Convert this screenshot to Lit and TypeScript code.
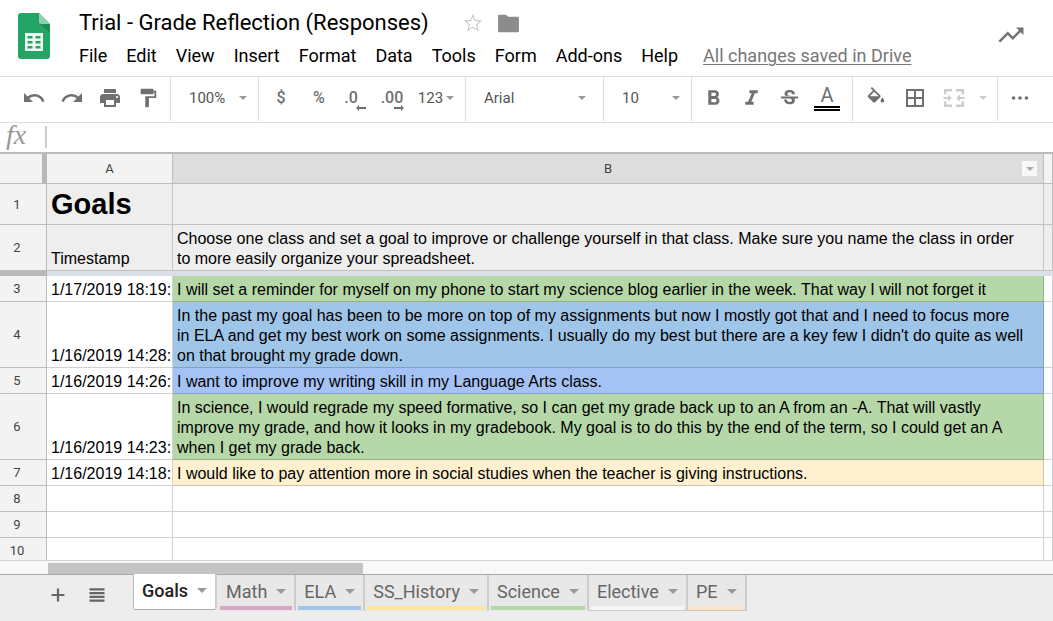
import { LitElement, html, svg, css, nothing } from "lit";
import { customElement, property, state } from "lit/decorators.js";
import { classMap } from "lit/directives/class-map.js";

const icons = {
  undo: svg`<path d="M12.5 8c-2.65 0-5.05.99-6.9 2.6L2 7v9h9l-3.62-3.62c1.39-1.16 3.16-1.88 5.12-1.88 3.54 0 6.55 2.31 7.6 5.5l2.37-.78C21.08 11.03 17.15 8 12.5 8z"/>`,
  redo: svg`<path d="M18.4 10.6C16.55 8.99 14.15 8 11.5 8c-4.65 0-8.58 3.03-9.96 7.22L3.9 16c1.05-3.19 4.05-5.5 7.6-5.5 1.95 0 3.73.72 5.12 1.88L13 16h9V7l-3.6 3.6z"/>`,
  print: svg`<path d="M19 8H5c-1.66 0-3 1.34-3 3v6h4v4h12v-4h4v-6c0-1.66-1.34-3-3-3zm-3 11H8v-5h8v5zm3-7c-.55 0-1-.45-1-1s.45-1 1-1 1 .45 1 1-.45 1-1 1zm-1-9H6v4h12V3z"/>`,
  paint: svg`<path d="M18 4V3c0-.55-.45-1-1-1H5c-.55 0-1 .45-1 1v4c0 .55.45 1 1 1h12c.55 0 1-.45 1-1V6h1v4H9v11c0 .55.45 1 1 1h2c.55 0 1-.45 1-1v-9h8V4h-3z"/>`,
  bold: svg`<path d="M15.6 10.79c.97-.67 1.65-1.77 1.65-2.79 0-2.26-1.75-4-4-4H7v14h7.04c2.09 0 3.71-1.7 3.71-3.79 0-1.52-.86-2.82-2.15-3.42zM10 6.5h3c.83 0 1.5.67 1.5 1.5s-.67 1.5-1.5 1.5h-3v-3zm3.5 9H10v-3h3.5c.83 0 1.5.67 1.5 1.5s-.67 1.5-1.5 1.5z"/>`,
  italic: svg`<path d="M10 4v3h2.21l-3.42 8H6v3h8v-3h-2.21l3.42-8H18V4z"/>`,
  strike: svg`<path d="M7.24 8.75c-.26-.48-.39-1.03-.39-1.67 0-.61.13-1.16.4-1.67.26-.5.63-.93 1.11-1.29.48-.35 1.05-.63 1.7-.83.66-.19 1.39-.29 2.18-.29.81 0 1.54.11 2.21.34.66.22 1.23.54 1.69.94.47.4.83.88 1.08 1.43.25.55.38 1.15.38 1.81h-3.01c0-.31-.05-.59-.15-.85-.09-.27-.24-.49-.44-.68-.2-.19-.45-.33-.75-.44-.3-.1-.66-.16-1.06-.16-.39 0-.74.04-1.03.13-.29.09-.53.21-.72.36-.19.16-.34.34-.44.55-.1.21-.15.43-.15.66 0 .48.25.88.74 1.21.38.25.77.48 1.41.7H7.39c-.05-.08-.11-.17-.15-.25zM21 12v-2H3v2h9.62c.18.07.4.14.55.2.37.17.66.34.87.51.21.17.35.36.43.57.07.2.11.43.11.69 0 .23-.05.45-.14.66-.09.2-.23.38-.42.53-.19.15-.42.26-.71.35-.29.08-.63.13-1.01.13-.43 0-.83-.04-1.18-.13s-.66-.23-.91-.42c-.25-.19-.45-.44-.59-.75-.14-.31-.25-.76-.25-1.21H6.4c0 .55.08 1.13.24 1.58.16.45.37.85.65 1.21.28.35.6.66.98.92.37.26.78.48 1.22.65.44.17.9.3 1.38.39.48.08.96.13 1.44.13.8 0 1.53-.09 2.18-.28s1.21-.45 1.67-.79c.46-.34.82-.77 1.07-1.27s.38-1.07.38-1.71c0-.6-.1-1.14-.31-1.61-.05-.11-.11-.23-.17-.33H21z"/>`,
  fill: svg`<path d="M16.56 8.94L7.62 0 6.21 1.41l2.38 2.38-5.15 5.15c-.59.59-.59 1.54 0 2.12l5.5 5.5c.29.29.68.44 1.06.44s.77-.15 1.06-.44l5.5-5.5c.59-.58.59-1.53 0-2.12zM5.21 10L10 5.21 14.79 10H5.21zM19 11.5s-2 2.17-2 3.5c0 1.1.9 2 2 2s2-.9 2-2c0-1.33-2-3.5-2-3.5z"/>`,
  borders: svg`<path d="M3 3v18h18V3H3zm8 16H5v-6h6v6zm0-8H5V5h6v6zm8 8h-6v-6h6v6zm0-8h-6V5h6v6z"/>`,
  merge: svg`<path d="M2 3h8v2.400H4.400V8.500H2zM14 3h8v5.500h-2.400V5.400H14zM2 15.500h2.400v3.100H10V21H2zM19.600 15.500H22V21h-8v-2.400h5.600zM1.500 11H6V8.600L9.800 12 6 15.400V13H1.500zM22.500 11H18V8.600L14.200 12l3.800 3.400V13h4.500z"/>`,
  more: svg`<circle cx="5" cy="12" r="2"/><circle cx="12" cy="12" r="2"/><circle cx="19" cy="12" r="2"/>`,
  star: svg`<path d="M22 9.240l-7.190-.62L12 2 9.190 8.630 2 9.240l5.460 4.730L5.820 21 12 17.270 18.180 21l-1.630-7.030L22 9.240zM12 16.100l-4.500 2.800 1.200-5.200-3.900-3.400 5.200-.42L12 5l2 4.880 5.200.42-3.900 3.400 1.200 5.200z"/>`,
  folder: svg`<path d="M9.600 3.500H3.200C2.500 3.500 2 4 2 4.700v14.600c0 .7.5 1.200 1.200 1.200h17.600c.7 0 1.200-.5 1.200-1.200V6.700c0-.7-.5-1.200-1.200-1.200H11.600z"/>`,
  trend: svg`<path d="M16 6l2.290 2.290-4.880 4.880-4-4L2 16.590 3.410 18l6-6 4 4 6.300-6.290L22 12V6z"/>`,
  plus: svg`<path d="M19 13.200h-5.800V19h-2.400v-5.800H5v-2.400h5.800V5h2.400v5.800H19z"/>`,
  list: svg`<path d="M3 4h18v2.600H3zM3 8.500h18v2.600H3zM3 13h18v2.600H3zM3 17.500h18v2.600H3z"/>`,
};
type IconName = keyof typeof icons;

const icon = (name: IconName, size = 24) =>
  html`<svg class="icon" width=${size} height=${size} viewBox="0 0 24 24" aria-hidden="true">${icons[name]}</svg>`;

const caret = () =>
  html`<svg class="caret" width="8" height="4" viewBox="0 0 8 4" aria-hidden="true"><path d="M0 0h8L4 4z" /></svg>`;

interface Row {
  n: number;
  stamp?: string;
  goal?: string;
  tone?: string;
}

const rows: Row[] = [
  { n: 3, stamp: "1/17/2019 18:19:", tone: "green", goal: "I will set a reminder for myself on my phone to start my science blog earlier in the week. That way I will not forget it" },
  { n: 4, stamp: "1/16/2019 14:28:", tone: "blue", goal: "In the past my goal has been to be more on top of my assignments but now I mostly got that and I need to focus more in ELA and get my best work on some assignments. I usually do my best but there are a key few I didn't do quite as well on that brought my grade down." },
  { n: 5, stamp: "1/16/2019 14:26:", tone: "indigo", goal: "I want to improve my writing skill in my Language Arts class." },
  { n: 6, stamp: "1/16/2019 14:23:", tone: "green", goal: "In science, I would regrade my speed formative, so I can get my grade back up to an A from an -A. That will vastly improve my grade, and how it looks in my gradebook. My goal is to do this by the end of the term, so I could get an A when I get my grade back." },
  { n: 7, stamp: "1/16/2019 14:18:", tone: "yellow", goal: "I would like to pay attention more in social studies when the teacher is giving instructions." },
  { n: 8 },
  { n: 9 },
  { n: 10 },
];

@customElement("doc-header")
class DocHeader extends LitElement {
  static styles = css`
    :host { display: flex; height: 76px; padding-left: 17px; box-sizing: border-box; font-family: Roboto, sans-serif; color: #000; }
    .logo { display: block; margin: 13px 28px 0 0; flex: none; }
    .main { flex: 1; min-width: 0; }
    .title-row { display: flex; align-items: center; height: 46px; }
    h1 { margin: 0 33px 0 0; font-size: 22px; line-height: 28px; font-weight: 400; white-space: nowrap; }
    button { border: 0; padding: 0; background: none; font: inherit; color: inherit; display: block; }
    .icon { display: block; fill: currentColor; }
    .star { color: #c4c4c4; margin-right: 12px; }
    .folder { color: #8c8c8c; }
    nav { display: flex; align-items: center; gap: 19px; height: 20px; font-size: 18px; line-height: 20px; white-space: nowrap; }
    a { color: #777; margin-left: 6px; text-underline-offset: 2px; text-decoration-thickness: 1px; }
    .trend { color: #757575; margin: 20px 27px 0 0; align-self: flex-start; }
  `;
  render() {
    const menus = ["File", "Edit", "View", "Insert", "Format", "Data", "Tools", "Form", "Add-ons", "Help"];
    return html`
      <svg class="logo" width="34" height="46" viewBox="0 0 34 46" role="img" aria-label="Sheets">
        <path fill="#23a566" d="M4 0h18l11 11v32a3 3 0 0 1-3 3H4a3 3 0 0 1-3-3V3a3 3 0 0 1 3-3z" />
        <path fill="#1c8f57" d="M23 11h10v9z" />
        <path fill="#8ed1b1" d="M22 0l11 11H24a2 2 0 0 1-2-2z" />
        <path fill="#f1f8f4" fill-rule="evenodd" d="M8 20h18v18H8zM10.500 23v2.500h5V23zM18.500 23v2.500h5V23zM10.500 28v2.500h5V28zM18.500 28v2.500h5V28zM10.500 33v2.500h5V33zM18.500 33v2.500h5V33z" />
      </svg>
      <div class="main">
        <div class="title-row">
          <h1>Trial - Grade Reflection (Responses)</h1>
          <button class="star" aria-label="Star">${icon("star", 22)}</button>
          <button class="folder" aria-label="Move to folder">${icon("folder", 25)}</button>
        </div>
        <nav>${menus.map((m) => html`<button>${m}</button>`)}<a href="#">All changes saved in Drive</a></nav>
      </div>
      <button class="trend" aria-label="Activity">${icon("trend", 30)}</button>
    `;
  }
}

@customElement("tool-bar")
class ToolBar extends LitElement {
  static styles = css`
    :host { display: flex; height: 47px; box-sizing: border-box; border: solid #ddd; border-width: 1px 0; padding-bottom: 1px; font: 500 16px/20px Roboto, sans-serif; color: #707070; }
    .group { display: flex; flex: none; align-items: center; border-right: 1px solid #ddd; box-sizing: border-box; padding: 0 3px 2px; }
    .history { width: 171px; padding-left: 15px; }
    .text { padding: 0 6px 2px 2px; }
    .cells { padding: 0 5px 2px 4px; width: 145px; gap: 1px; }
    .last { border: 0; }
    button { border: 0; padding: 0; background: none; font: inherit; color: inherit; width: 38px; height: 32px; display: flex; align-items: center; justify-content: center; position: relative; flex: none; }
    .icon { display: block; fill: currentColor; }
    .caret { fill: #999; display: block; flex: none; }
    .num { width: 48px; gap: 3px; padding-right: 4px; box-sizing: border-box; font-size: 15px; font-weight: 400; color: #555; }
    .dec { padding-right: 12px; }
    .dec2 { padding-right: 6px; }
    .shift { position: absolute; right: 10px; bottom: 3px; fill: currentColor; }
    .pick { display: grid; align-items: center; }
    .pick > * { grid-area: 1 / 1; }
    .pick .caret { justify-self: end; margin-right: 8px; pointer-events: none; }
    .font .caret { margin-right: 14px; }
    select { appearance: none; border: 0; background: none; font: 400 15px/20px Roboto, sans-serif; color: #555; padding: 0 20px 0 15px; height: 30px; width: 81px; }
    .font select { width: 131px; }
    .letter { flex-direction: column; gap: 1px; font-size: 20px; line-height: 20px; font-weight: 400; }
    .letter::after { content: ""; width: 26px; height: 1px; border: solid #000; border-width: 2px 0; }
    .off { color: #ccc; }
    .tiny { width: 18px; color: #ccc; }
    .tiny .caret { fill: #ccc; }
  `;
  private tool(name: IconName, label: string, size: number, cls = "") {
    return html`<button class=${cls} aria-label=${label}>${icon(name, size)}</button>`;
  }
  private pick(label: string, value: string, cls = "") {
    return html`<label class="group pick ${cls}"><select aria-label=${label}><option>${value}</option></select>${caret()}</label>`;
  }
  render() {
    return html`
      <div class="group history">
        ${this.tool("undo", "Undo", 24)}${this.tool("redo", "Redo", 24)}${this.tool("print", "Print", 24)}${this.tool("paint", "Paint format", 22)}
      </div>
      ${this.pick("Zoom", "100%")}
      <div class="group">
        <button aria-label="Currency">$</button>
        <button aria-label="Percent">%</button>
        <button class="dec" aria-label="Fewer decimals">.0
          <svg class="shift" width="10" height="6" viewBox="0 0 10 6"><path d="M0 3l3-3v2h7v2H3v2z" /></svg></button>
        <button class="dec2" aria-label="More decimals">.00
          <svg class="shift" width="10" height="6" viewBox="0 0 10 6"><path d="M10 3L7 0v2H0v2h7v2z" /></svg></button>
        <button class="num" aria-label="More formats">123${caret()}</button>
      </div>
      ${this.pick("Font", "Arial", "font")}
      ${this.pick("Font size", "10")}
      <div class="group text">
        ${this.tool("bold", "Bold", 25)}${this.tool("italic", "Italic", 25)}${this.tool("strike", "Strikethrough", 23)}
        <button class="letter" aria-label="Text color">A</button>
      </div>
      <div class="group cells">
        ${this.tool("fill", "Fill color", 22)}${this.tool("borders", "Borders", 24)}${this.tool("merge", "Merge cells", 24, "off")}
        <button class="tiny" aria-label="Merge options">${caret()}</button>
      </div>
      <div class="group last">${this.tool("more", "More", 22)}</div>
    `;
  }
}

@customElement("sheet-grid")
class SheetGrid extends LitElement {
  static styles = css`
    :host { display: block; overflow: hidden; font: 16px/20px "Liberation Sans", Arial, sans-serif; color: #000; background: #fff; }
    table { width: 100%; table-layout: fixed; border-collapse: separate; border-spacing: 0; }
    .c-num { width: 47px; }
    .c-a { width: 126px; }
    .c-c { width: 9px; }
    th, td { box-sizing: border-box; padding: 4px 4px 1px; height: 26px; border: solid rgba(0, 0, 0, 0.18); border-width: 0 1px 1px 0; vertical-align: bottom; text-align: left; }
    th { font: 400 13px/20px Roboto, sans-serif; color: #444; text-align: center; vertical-align: middle; background: #f3f3f3; border-color: #bdbdbd; }
    tbody th { padding: 3px 12px 2px 0; }
    thead th { height: 30px; padding: 3px 4px; }
    .corner { border-right: 5px solid #b8b8b8; }
    .picked { background: #ddd; }
    .head { display: grid; align-items: center; }
    .head > * { grid-area: 1 / 1; }
    .menu { justify-self: end; width: 15px; height: 15px; margin-right: 2px; padding: 0; border: 0; background: #f8f8f8; display: grid; place-items: center; }
    .caret { fill: #aaa; display: block; }
    .frozen td { background: #eee; border-color: #c2c2c2; }
    .tall td { height: 41px; padding-top: 2px; padding-bottom: 3px; }
    .big { font-size: 29px; line-height: 34px; font-weight: 700; }
    .stamp { white-space: nowrap; overflow: hidden; }
    .wrap { padding-right: 18px; }
    .split th, .split td { height: 5px; padding: 0; border: 0; background: #dadfe8; }
    .split th { background: #b8b8b8; }
    .green { background: #b6d7a8; }
    .blue { background: #9fc5e8; }
    .indigo { background: #a4c2f4; }
    .yellow { background: #fff0cf; }
  `;
  render() {
    return html`
      <table>
        <colgroup><col class="c-num" /><col class="c-a" /><col /><col class="c-c" /></colgroup>
        <thead>
          <tr>
            <th class="corner"></th>
            <th>A</th>
            <th class="picked"><div class="head"><span>B</span><button class="menu" aria-label="Column menu">${caret()}</button></div></th>
            <th></th>
          </tr>
        </thead>
        <tbody>
          <tr class="frozen tall"><th>1</th><td class="big">Goals</td><td></td><td></td></tr>
          <tr class="frozen">
            <th>2</th>
            <td>Timestamp</td>
            <td class="wrap">Choose one class and set a goal to improve or challenge yourself in that class. Make sure you name the class in order to more easily organize your spreadsheet.</td>
            <td></td>
          </tr>
          <tr class="split"><th></th><td colspan="3"></td></tr>
          ${rows.map(
            (r) => html`<tr><th>${r.n}</th><td class="stamp">${r.stamp ?? nothing}</td><td class="wrap ${r.tone ?? ""}">${r.goal ?? nothing}</td><td></td></tr>`
          )}
        </tbody>
      </table>
    `;
  }
}

@customElement("sheet-tabs")
class SheetTabs extends LitElement {
  @property() active = "Goals";
  static styles = css`
    :host { display: flex; align-items: flex-start; height: 47px; box-sizing: border-box; background: #ededed; border-top: 1px solid #a8a8a8; padding-left: 46px; font: 18px/24px Roboto, sans-serif; }
    button { border: 0; padding: 0; background: none; font: inherit; color: #666; flex: none; }
    .tool { width: 24px; height: 40px; display: grid; place-items: center; margin-right: 15px; }
    .icon { display: block; fill: #666; }
    .tabs { display: flex; margin-left: 9px; }
    .tab { display: flex; align-items: center; gap: 9px; height: 36px; box-sizing: border-box; padding: 0 8px 2px; background: #e8e8e8; border: solid #ccc; border-width: 0 2px 1px 0; border-bottom-color: transparent; position: relative; }
    .tab::after { content: ""; position: absolute; left: 2px; right: 2px; bottom: 0; height: 4px; background: var(--tone, transparent); }
    .active { background: #fff; color: #222; font-weight: 500; border-left: 1px solid #bbb; border-bottom-color: #aaa; border-radius: 0 0 2px 2px; margin: -1px 1px 0 0; height: 36px; }
    .caret { fill: #999; display: block; width: 10px; height: 5px; }
    .pink { --tone: #d5a6bd; }
    .blue { --tone: #9fc5e8; }
    .gold { --tone: #ffe599; }
    .green { --tone: #b6d7a8; }
    .pale { --tone: #f6f6f6; border-bottom-color: #ccc; }
    .peach { --tone: #fce5cd; border-bottom-color: #d8c4b4; }
  `;
  render() {
    const tabs = [
      ["Goals", ""], ["Math", "pink"], ["ELA", "blue"], ["SS_History", "gold"],
      ["Science", "green"], ["Elective", "pale"], ["PE", "peach"],
    ];
    return html`
      <button class="tool" aria-label="Add sheet">${icon("plus", 22)}</button>
      <button class="tool" aria-label="All sheets">${icon("list", 20)}</button>
      <div class="tabs">
        ${tabs.map(([name, tone]) => html`<button class=${classMap({ tab: true, active: name === this.active, [tone || "plain"]: true })}><span>${name}</span>${caret()}</button>`)}
      </div>
    `;
  }
}

@customElement("app-root")
class AppRoot extends LitElement {
  @state() private formula = "";
  static styles = css`
    :host { display: flex; flex-direction: column; height: 100vh; background: #fff; overflow: hidden; }
    .formula { display: flex; align-items: center; height: 31px; box-sizing: border-box; border-bottom: 2px solid #bbb; padding: 0 0 2px 6px; flex: none; }
    .fx { width: 39px; font: italic 28px/26px "Liberation Serif", serif; color: #999; box-sizing: border-box; padding-bottom: 4px; }
    input { flex: 1; height: 22px; border: 0; border-left: 2px solid #ccc; padding: 0 8px; outline: 0; font: 16px "Liberation Sans", sans-serif; box-sizing: border-box; }
    doc-header, tool-bar, sheet-tabs { flex: none; }
    sheet-grid { flex: 1; min-height: 0; }
    .scroll { flex: none; height: 14px; box-sizing: border-box; border-top: 1px solid #d4d4d4; background: #f8f8f8; padding: 2px 0 0 48px; }
    .thumb { width: 315px; height: 11px; background: #c4c4c4; }
  `;
  render() {
    return html`
      <doc-header></doc-header>
      <tool-bar></tool-bar>
      <div class="formula">
        <label class="fx" for="fx">fx</label>
        <input id="fx" .value=${this.formula} aria-label="Formula" />
      </div>
      <sheet-grid></sheet-grid>
      <div class="scroll"><div class="thumb"></div></div>
      <sheet-tabs></sheet-tabs>
    `;
  }
}
